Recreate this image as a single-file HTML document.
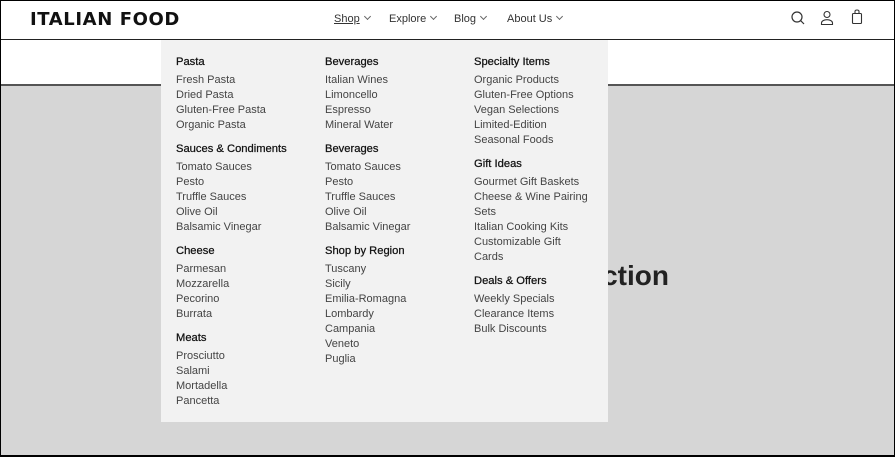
<!DOCTYPE html>
<html><head><meta charset="utf-8"><style>
*{margin:0;padding:0;box-sizing:border-box}
html,body{width:895px;height:457px;overflow:hidden;background:#fff}
body{font-family:"Liberation Sans",sans-serif;position:relative}
.frame{position:absolute;left:0;top:0;width:895px;height:457px;border:1px solid #000;border-bottom-width:2px}
.header{position:absolute;left:0;top:0;width:895px;height:40px;border-bottom:1px solid #222}
.logo{position:absolute;left:30px;top:9px;font-family:"DejaVu Sans",sans-serif;font-weight:bold;font-size:18px;letter-spacing:0.6px;color:#111}
.nav{position:absolute;top:13px;font-size:11px;color:#333}
.nav span.c{display:inline-block;width:5px;height:5px;border-right:1px solid #666;border-bottom:1px solid #666;transform:rotate(45deg);margin-left:5px;position:relative;top:-3px}
.band{position:absolute;left:1px;top:84px;width:893px;height:371px;background:#d6d6d6;border-top:2px solid #555}
.title{position:absolute;right:225px;top:174px;font-size:28px;font-weight:bold;color:#222;white-space:nowrap}
.dd{position:absolute;left:161px;top:40px;width:447px;height:382px;background:#f2f2f2}
.col{position:absolute;top:15px;width:150px;font-size:11px}
.col h4{font-weight:normal;color:#111;font-size:11.2px;line-height:15px;margin-bottom:3px;-webkit-text-stroke:0.25px #111}
.col a{display:block;color:#444;line-height:15px;text-decoration:none;white-space:nowrap}
.col .g{margin-bottom:9px}
</style></head><body>
<div class="band"><div class="title">Explore Our Collection</div></div>
<div class="header">
<div class="logo">ITALIAN FOOD</div>
<div class="nav" style="left:334px"><span style="text-decoration:underline">Shop</span><span class="c"></span></div>
<div class="nav" style="left:389px">Explore<span class="c"></span></div>
<div class="nav" style="left:454px">Blog<span class="c"></span></div>
<div class="nav" style="left:507px">About Us<span class="c"></span></div>
<svg style="position:absolute;left:790px;top:10px" width="16" height="16" viewBox="0 0 16 16" fill="none" stroke="#333" stroke-width="1.2"><circle cx="7" cy="7" r="5"/><path d="M10.6 10.6L14 14"/></svg>
<svg style="position:absolute;left:820px;top:10px" width="14" height="16" viewBox="0 0 14 16" fill="none" stroke="#333" stroke-width="1.1"><circle cx="7" cy="4.5" r="3"/><path d="M1.5 14.5v-1.5c0-2 2.5-3.3 5.5-3.3s5.5 1.3 5.5 3.3v1.5z"/></svg>
<svg style="position:absolute;left:851px;top:9px" width="12" height="16" viewBox="0 0 12 16" fill="none" stroke="#333" stroke-width="1.1"><rect x="1.5" y="4.5" width="9" height="10" rx="1"/><path d="M4 4.5V2.5c0-1 .8-1.5 2-1.5s2 .5 2 1.5v2"/></svg>
</div>
<div class="dd">
<div class="col" style="left:15px">
<div class="g"><h4>Pasta</h4><a>Fresh Pasta</a><a>Dried Pasta</a><a>Gluten-Free Pasta</a><a>Organic Pasta</a></div>
<div class="g"><h4>Sauces &amp; Condiments</h4><a>Tomato Sauces</a><a>Pesto</a><a>Truffle Sauces</a><a>Olive Oil</a><a>Balsamic Vinegar</a></div>
<div class="g"><h4>Cheese</h4><a>Parmesan</a><a>Mozzarella</a><a>Pecorino</a><a>Burrata</a></div>
<div class="g"><h4>Meats</h4><a>Prosciutto</a><a>Salami</a><a>Mortadella</a><a>Pancetta</a></div>
</div>
<div class="col" style="left:164px">
<div class="g"><h4>Beverages</h4><a>Italian Wines</a><a>Limoncello</a><a>Espresso</a><a>Mineral Water</a></div>
<div class="g"><h4>Beverages</h4><a>Tomato Sauces</a><a>Pesto</a><a>Truffle Sauces</a><a>Olive Oil</a><a>Balsamic Vinegar</a></div>
<div class="g"><h4>Shop by Region</h4><a>Tuscany</a><a>Sicily</a><a>Emilia-Romagna</a><a>Lombardy</a><a>Campania</a><a>Veneto</a><a>Puglia</a></div>
</div>
<div class="col" style="left:313px">
<div class="g"><h4>Specialty Items</h4><a>Organic Products</a><a>Gluten-Free Options</a><a>Vegan Selections</a><a>Limited-Edition</a><a>Seasonal Foods</a></div>
<div class="g"><h4>Gift Ideas</h4><a>Gourmet Gift Baskets</a><a>Cheese &amp; Wine Pairing</a><a>Sets</a><a>Italian Cooking Kits</a><a>Customizable Gift</a><a>Cards</a></div>
<div class="g"><h4>Deals &amp; Offers</h4><a>Weekly Specials</a><a>Clearance Items</a><a>Bulk Discounts</a></div>
</div>
</div>
<div class="frame"></div>
</body></html>
